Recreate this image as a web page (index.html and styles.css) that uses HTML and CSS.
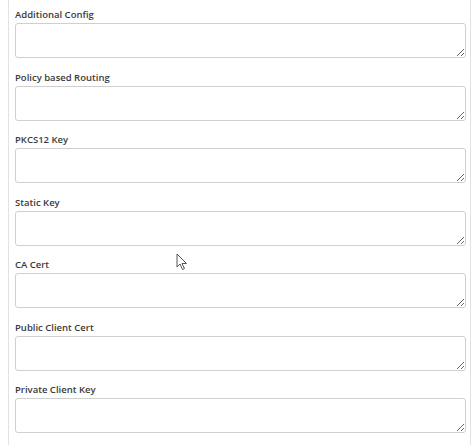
FILE: index.html
```html
<!DOCTYPE html>
<html>
<head>
<meta charset="utf-8">
<link rel="stylesheet" href="styles.css">
</head>
<body>
<div class="panel">
  <div class="field"><label class="lbl">Additional Config</label><textarea class="ta"></textarea></div>
  <div class="field"><label class="lbl">Policy based Routing</label><textarea class="ta"></textarea></div>
  <div class="field"><label class="lbl">PKCS12 Key</label><textarea class="ta"></textarea></div>
  <div class="field"><label class="lbl">Static Key</label><textarea class="ta"></textarea></div>
  <div class="field"><label class="lbl">CA Cert</label><textarea class="ta"></textarea></div>
  <div class="field"><label class="lbl">Public Client Cert</label><textarea class="ta"></textarea></div>
  <div class="field"><label class="lbl">Private Client Key</label><textarea class="ta"></textarea></div>
  <svg class="cursor" width="12" height="18" viewBox="0 0 12 18"><path d="M1 1 L1 14 L4 11 L6.5 16.5 L8.5 15.5 L6 10.5 L10.5 10.5 Z" fill="#fff" stroke="#555" stroke-width="1"/></svg>
</div>
</body>
</html>
```
FILE: styles.css
```css
html, body { margin: 0; padding: 0; background: #fff; }
body { width: 474px; height: 445px; overflow: hidden; }
.panel {
  position: relative;
  margin-left: 8px;
  width: 449px;
  height: 445px;
  border-left: 1px solid #e2e2e2;
  border-right: 1px solid #e2e2e2;
  padding: 5px 6px 0 6px;
}
.field { height: 62.5px; }
.lbl {
  display: block;
  font-family: "Open Sans", sans-serif;
  font-weight: 600;
  font-size: 9.5px;
  line-height: 15px;
  color: #3a3a3a;
  padding-top: 2px;
  margin-bottom: 1px;
}
.ta {
  display: block;
  box-sizing: border-box;
  width: 451px;
  height: 35px;
  margin: 0;
  border: 1px solid #cfcfcf;
  border-radius: 3px;
  background: #fff;
  resize: vertical;
}
.cursor { position: absolute; left: 167px; top: 253px; }
```
